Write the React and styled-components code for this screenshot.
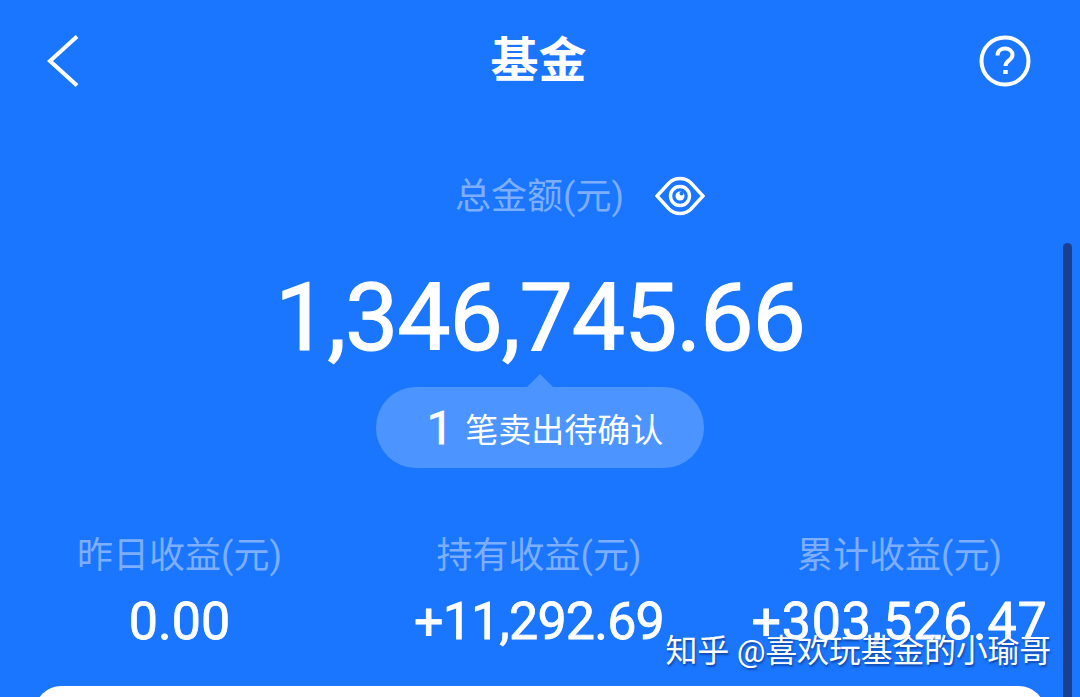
import styled, { createGlobalStyle } from "styled-components";

const GlobalStyle = createGlobalStyle`
html,body{
margin:0;
padding:0;
background:#1a76ff;
}
`;
const CJK = `Roboto,"Noto Sans CJK SC",sans-serif`;
const Page = styled.div`
position:relative;
width:1080px;
height:697px;
overflow:hidden;
background:#1a76ff;
color:#fff;
font-family:${CJK};
`;
const TopBar = styled.header`
display:grid;
grid-template-columns:1fr auto 1fr;
align-items:center;
height:122px;
padding:0 49px 0 46px;
`;
const Title = styled.h1`
margin:0;
font-size:48px;
line-height:122px;
font-weight:700;
`;
const IconButton = styled.div`
display:flex;
justify-self:${p => p.$end ? "end" : "start"};
svg{display:block;}
`;
const Total = styled.section`
display:flex;
flex-direction:column;
align-items:center;
padding-top:46px;
`;
const TotalLabel = styled.div`
display:flex;
align-items:center;
gap:31px;
height:50px;
padding-left:80px;
font-size:36px;
color:#7daeff;
svg{margin-top:5px;}
`;
const Amount = styled.div`
margin-top:42px;
font-size:95px;
line-height:116px;
font-weight:400;
letter-spacing:-1.1px;
-webkit-text-stroke:1.2px #fff;
`;
const Pill = styled.div`
position:relative;
display:flex;
align-items:center;
justify-content:center;
gap:12px;
box-sizing:border-box;
width:328px;
height:81px;
margin-top:11px;
padding-left:10px;
border-radius:40px;
background:#4c94ff;
font-size:33px;
&::before{
content:"";
position:absolute;
top:-13px;
left:50%;
margin-left:-13px;
border-left:13px solid transparent;
border-right:13px solid transparent;
border-bottom:13px solid #4c94ff;
}
`;
const PillCount = styled.span`
font-size:47px;
font-weight:400;
-webkit-text-stroke:.8px #fff;
`;
const Stats = styled.section`
display:grid;
grid-template-columns:359px 360px 361px;
margin-top:63px;
`;
const Stat = styled.div`
display:flex;
flex-direction:column;
align-items:center;
`;
const StatLabel = styled.div`
font-size:36px;
line-height:50px;
color:#7daeff;
white-space:nowrap;
`;
const StatValue = styled.div`
margin-top:11px;
font-size:52px;
line-height:60px;
font-weight:400;
letter-spacing:${p => p.$spacing}px;
-webkit-text-stroke:.8px #fff;
white-space:nowrap;
`;
const Card = styled.div`
height:60px;
margin:34px 35px 0;
border-radius:26px 26px 0 0;
background:#fff;
`;
const ScrollThumb = styled.div`
position:absolute;
top:243px;
right:8px;
bottom:0;
width:9px;
border-radius:5px 5px 0 0;
background:#1a3f8f;
`;
const Watermark = styled.div`
position:absolute;
right:29px;
top:630px;
font-size:32px;
line-height:42px;
letter-spacing:-.25px;
white-space:nowrap;
text-shadow:1px 2px 2px rgba(10,40,110,.6);
`;

const stats = [
    { label: "昨日收益(元)", value: "0.00", spacing: 0 },
    { label: "持有收益(元)", value: "+11,292.69", spacing: -.8 },
    { label: "累计收益(元)", value: "+303,526.47", spacing: .8 },
];

export default function App() {
    return (
        <Page>
            <GlobalStyle />
            <TopBar>
                <IconButton>
                    <svg width="34" height="56" viewBox="0 0 34 56" fill="none">
                        <path d="M31 3.5 L4 28 L31 52.5" stroke="#fff" strokeWidth="4" />
                    </svg>
                </IconButton>
                <Title>基金</Title>
                <IconButton $end>
                    <svg width="52" height="52" viewBox="0 0 52 52" fill="none" stroke="#fff" strokeWidth="4">
                        <circle cx="26" cy="26" r="23.5" />
                        <path d="M18.5 20.5 C18.5 16 22 13.5 26 13.5 C30 13.5 33.5 16 33.5 20 C33.5 25 26.5 25.5 26.5 31" />
                        <path d="M26.5 35 V39" strokeWidth="4.5" />
                    </svg>
                </IconButton>
            </TopBar>
            <Total>
                <TotalLabel>
                    总金额(元)
                    <svg width="50" height="40" viewBox="0 0 50 40" fill="none" stroke="#fff" strokeWidth="3.4">
                        <path d="M2 20 L14 7 C20 1 30 1 36 7 L48 20 L36 33 C30 39 20 39 14 33 Z" />
                        <circle cx="25" cy="20" r="9.5" />
                        <circle cx="25" cy="20" r="4.5" fill="#fff" stroke="none" />
                        <circle cx="26.5" cy="17.5" r="2" fill="#1a76ff" stroke="none" />
                    </svg>
                </TotalLabel>
                <Amount>1,346,745.66</Amount>
                <Pill>
                    <PillCount>1</PillCount>
                    笔卖出待确认
                </Pill>
            </Total>
            <Stats>
                {stats.map(s => (
                    <Stat key={s.label}>
                        <StatLabel>{s.label}</StatLabel>
                        <StatValue $spacing={s.spacing}>{s.value}</StatValue>
                    </Stat>
                ))}
            </Stats>
            <Card />
            <ScrollThumb />
            <Watermark>知乎 @喜欢玩基金的小瑜哥</Watermark>
        </Page>
    );
}
